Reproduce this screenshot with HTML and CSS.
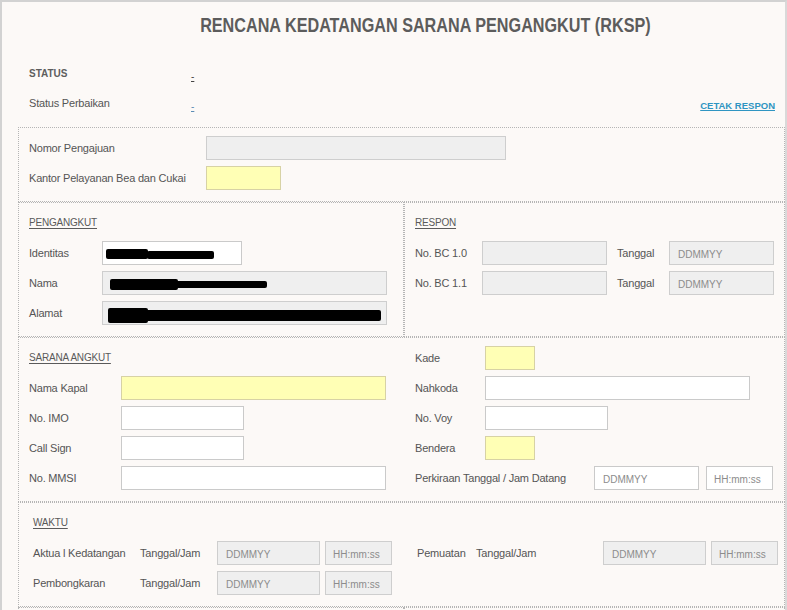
FILE: index.html
```html
<!DOCTYPE html>
<html lang="id">
<head>
<meta charset="utf-8">
<title>RKSP</title>
<link rel="stylesheet" href="styles.css">
</head>
<body>
<div class="page">
  <h1 class="title"><span class="title-text">RENCANA KEDATANGAN SARANA PENGANGKUT (RKSP)</span></h1>

  <div class="status">
    <div class="status-row">
      <span class="status-label caps">STATUS</span>
      <span class="status-value">-</span>
    </div>
    <div class="status-row">
      <span class="status-label">Status Perbaikan</span>
      <span class="status-value link">-</span>
      <a class="print-link" href="#">CETAK RESPON</a>
    </div>
  </div>

  <div class="form">
    <div class="box">
      <div class="fields">
        <div class="field"><span class="label w177">Nomor Pengajuan</span><span class="input gray w300"></span></div>
        <div class="field"><span class="label w177">Kantor Pelayanan Bea dan Cukai</span><span class="input yellow w75"></span></div>
      </div>
    </div>

    <div class="pair">
      <div class="box left">
        <div class="fields">
          <div class="field"><span class="heading">PENGANGKUT</span></div>
          <div class="field"><span class="label w73">Identitas</span><span class="input w140 redacted"><span class="ink ink-a"></span><span class="ink ink-b"></span></span></div>
          <div class="field"><span class="label w73">Nama</span><span class="input gray w285 redacted"><span class="ink ink-c"></span><span class="ink ink-d"></span></span></div>
          <div class="field"><span class="label w73">Alamat</span><span class="input gray w285 redacted"><span class="ink ink-e"></span><span class="ink ink-f"></span></span></div>
        </div>
      </div>
      <div class="box right">
        <div class="fields">
          <div class="field"><span class="heading">RESPON</span></div>
          <div class="field"><span class="label w67">No. BC 1.0</span><span class="input gray w125"></span><span class="label w52 ml10">Tanggal</span><span class="input gray w105"><span class="ph">DDMMYY</span></span></div>
          <div class="field"><span class="label w67">No. BC 1.1</span><span class="input gray w125"></span><span class="label w52 ml10">Tanggal</span><span class="input gray w105"><span class="ph">DDMMYY</span></span></div>
        </div>
      </div>
    </div>

    <div class="box">
      <div class="cols cols-sarana">
        <div class="fields">
          <div class="field"><span class="heading">SARANA ANGKUT</span></div>
          <div class="field"><span class="label w92">Nama Kapal</span><span class="input yellow w265"></span></div>
          <div class="field"><span class="label w92">No. IMO</span><span class="input w123"></span></div>
          <div class="field"><span class="label w92">Call Sign</span><span class="input w123"></span></div>
          <div class="field"><span class="label w92">No. MMSI</span><span class="input w265"></span></div>
        </div>
        <div class="fields">
          <div class="field"><span class="label w70">Kade</span><span class="input yellow w50"></span></div>
          <div class="field"><span class="label w70">Nahkoda</span><span class="input w265"></span></div>
          <div class="field"><span class="label w70">No. Voy</span><span class="input w123"></span></div>
          <div class="field"><span class="label w70">Bendera</span><span class="input yellow w50"></span></div>
          <div class="field"><span class="label w179">Perkiraan Tanggal / Jam Datang</span><span class="input w105"><span class="ph">DDMMYY</span></span><span class="input w67 ml7"><span class="ph ph-time">HH:mm:ss</span></span></div>
        </div>
      </div>
    </div>

    <div class="box waktu">
      <div class="cols cols-waktu">
        <div class="fields">
          <div class="field"><span class="heading">WAKTU</span></div>
          <div class="field"><span class="label w107">Aktua l Kedatangan</span><span class="label w77">Tanggal/Jam</span><span class="input gray w103"><span class="ph">DDMMYY</span></span><span class="input gray w67 ml5"><span class="ph ph-time">HH:mm:ss</span></span></div>
          <div class="field"><span class="label w107">Pembongkaran</span><span class="label w77">Tanggal/Jam</span><span class="input gray w103"><span class="ph">DDMMYY</span></span><span class="input gray w67 ml5"><span class="ph ph-time">HH:mm:ss</span></span></div>
        </div>
        <div class="fields">
          <div class="field"></div>
          <div class="field"><span class="label w59">Pemuatan</span><span class="label w127">Tanggal/Jam</span><span class="input gray w103"><span class="ph">DDMMYY</span></span><span class="input gray w67 ml5"><span class="ph ph-time">HH:mm:ss</span></span></div>
        </div>
      </div>
    </div>

    <div class="pair">
      <div class="box left tall"></div>
      <div class="box right tall"></div>
    </div>
  </div>
</div>
</body>
</html>
```
FILE: styles.css
```css
* { box-sizing: border-box; }
html, body { margin: 0; padding: 0; }
body {
  background: #fcf9f7;
  font-family: "Liberation Sans", Arial, sans-serif;
  font-size: 11px;
  color: #555;
}
.page {
  border-top: 2px solid #d2d2d2;
  border-left: 2px solid #d2d2d2;
  border-right: 2px solid #d9d9d9;
  height: 610px;
  overflow: hidden;
}
.title {
  margin: 0;
  padding: 11px 0 0 64px;
  text-align: center;
  font-family: "Liberation Sans", sans-serif;
  font-size: 19.5px;
  line-height: 24px;
  font-weight: bold;
  color: #5c5c5c;
}
.title-text {
  display: inline-block;
  white-space: nowrap;
  transform: scaleX(0.83);
}
.status { margin-top: 21px; padding: 0 10px 0 27px; }
.status-row { display: flex; height: 30px; align-items: center; }
.status-label { width: 162px; letter-spacing: -0.2px; }
.status-label.caps { font-size: 10px; font-weight: bold; color: #5e5e5e; letter-spacing: 0; }
.status-value { padding-top: 7px; font-size: 10px; color: #444; text-decoration: underline; }
.status-value.link { color: #5b8db5; }
.print-link {
  margin-left: auto;
  padding-top: 4px;
  font-size: 9.5px;
  font-weight: bold;
  color: #2f95c2;
  text-decoration: underline;
}
.form { margin: 9px 0 0 16px; }
.box {
  border: 1px dotted #b5b5b5;
  padding: 8px 10px 11px 10px;
}
.pair { display: flex; }
.pair .left { width: 386px; flex: none; }
.pair .right { flex: 1; }
.pair .tall { height: 40px; }
.fields { display: flex; flex-direction: column; gap: 6px; }
.field { display: flex; align-items: center; height: 24px; }
.label { flex: none; line-height: 24px; letter-spacing: -0.2px; white-space: nowrap; }
.heading {
  font-size: 10px;
  line-height: 24px;
  letter-spacing: -0.2px;
  text-decoration: underline;
  text-underline-offset: 2px;
  color: #5a5a5a;
}
.input {
  flex: none;
  display: flex;
  align-items: center;
  height: 24px;
  border: 1px solid #cacaca;
  background: #fff;
}
.input.gray { background: #efefef; border-color: #cecece; }
.input.yellow { background: #ffffb5; border-color: #d7d2a5; }
.ph { padding: 2px 0 0 8px; font-size: 10px; color: #8c8c8c; }
.ph-time { padding-left: 7px; }
.cols { display: grid; }
.cols-sarana { grid-template-columns: 386px 1fr; }
.waktu { padding-left: 14px; }
.cols-waktu { grid-template-columns: 384px 1fr; }

.redacted { position: relative; }
.ink { position: absolute; background: #000; border-radius: 2px; }
.ink-a { left: 3px; top: 7px; width: 42px; height: 10px; }
.ink-b { left: 44px; top: 9px; width: 67px; height: 8px; }
.ink-c { left: 7px; top: 7px; width: 68px; height: 11px; }
.ink-d { left: 72px; top: 9px; width: 92px; height: 7px; }
.ink-e { left: 5px; top: 6px; width: 40px; height: 15px; }
.ink-f { left: 42px; top: 8px; width: 236px; height: 11px; }

.w50 { width: 50px; } .w52 { width: 52px; } .w59 { width: 59px; }
.w67 { width: 67px; } .w70 { width: 70px; } .w73 { width: 73px; }
.w75 { width: 75px; } .w77 { width: 77px; } .w92 { width: 92px; }
.w103 { width: 103px; } .w105 { width: 105px; } .w107 { width: 107px; }
.w123 { width: 123px; } .w125 { width: 125px; } .w127 { width: 127px; }
.w140 { width: 140px; } .w177 { width: 177px; } .w179 { width: 179px; }
.w265 { width: 265px; } .w285 { width: 285px; } .w300 { width: 300px; }
.ml5 { margin-left: 5px; } .ml7 { margin-left: 7px; } .ml10 { margin-left: 10px; }
```
